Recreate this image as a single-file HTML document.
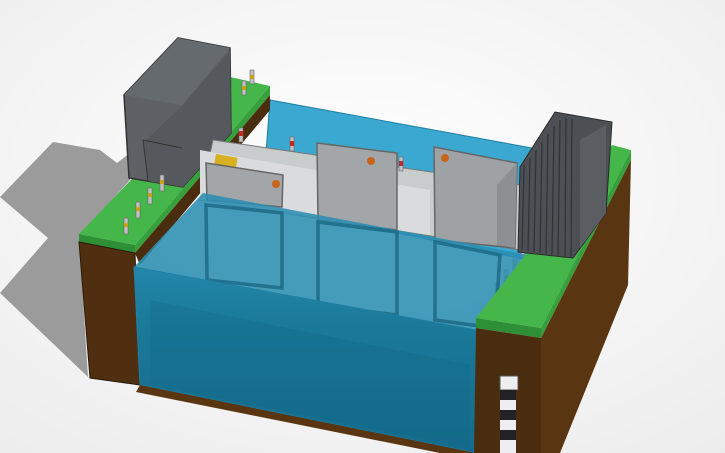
<!DOCTYPE html>
<html><head><meta charset="utf-8"><style>html,body{margin:0;padding:0;width:725px;height:453px;overflow:hidden;background:#f4f4f4}</style></head>
<body>
<svg width="725" height="453" viewBox="0 0 725 453" xmlns="http://www.w3.org/2000/svg">
<defs>
<radialGradient id="bg" cx="0.5" cy="0.4" r="0.8"><stop offset="0" stop-color="#ffffff"/><stop offset="1" stop-color="#ececec"/></radialGradient>
<linearGradient id="front" x1="0" y1="0" x2="0" y2="1"><stop offset="0" stop-color="#2387a9"/><stop offset="0.35" stop-color="#1a7898"/><stop offset="1" stop-color="#146c8b"/></linearGradient>
</defs>
<rect width="725" height="453" fill="url(#bg)"/>
<!-- shadow -->
<polygon points="0,197 53,142 100,150 117,163 130,153 130,180 79,236 88,377 0,293 48,238" fill="#9b9b9b"/>
<!-- back water wall -->
<polygon points="270,100 532,148 528,260 262,205" fill="#3aa8d0" stroke="#1f7fa3" stroke-width="1"/>
<!-- left green ledge -->
<polygon points="79,234 230,77 270,86 135,245" fill="#45b64a"/>
<polygon points="79,234 135,245 135,253 79,242" fill="#2f8f36"/>
<polygon points="135,245 270,86 270,95 135,253" fill="#36a03c"/>
<!-- left brown -->
<polygon points="79,242 135,253 140,385 90,378" fill="#4f2f10" stroke="#2a1906" stroke-width="1"/>
<polygon points="135,253 270,95 270,110 140,265" fill="#4a2c0e"/>
<!-- left block -->
<polygon points="124,95 178,38 230,48 231,133 183,187 129,178" fill="#5e6266" stroke="#333" stroke-width="1.5"/>
<polygon points="124,95 178,38 230,48 182,105" fill="#656a6e"/>
<polygon points="143,143 183,105 230,50 231,133 183,187 148,181" fill="#55595d"/>
<line x1="143" y1="140" x2="148" y2="181" stroke="#333"/>
<line x1="143" y1="140" x2="182" y2="148" stroke="#333"/>
<!-- gray structure -->
<polygon points="213,140 520,185 520,250 200,200" fill="#c9cccd" stroke="#777"/>
<polygon points="200,150 430,190 430,235 200,200" fill="#d9dbdc"/>
<rect x="216" y="154" width="22" height="10" fill="#d8b020" transform="rotate(10 216 154)"/>
<polygon points="206,163 283,175 282,207 207,200" fill="#a2a6a8" stroke="#666" stroke-width="1.5"/>
<polygon points="317,143 397,153 397,230 318,220" fill="#a2a6a8" stroke="#666" stroke-width="1.5"/>
<polygon points="434,147 517,163 515,248 435,240" fill="#9ea2a4" stroke="#666" stroke-width="1.5"/>
<polygon points="497,185 517,163 515,248 497,245" fill="#8c9092"/>
<circle cx="276" cy="184" r="4" fill="#c8651a"/>
<circle cx="371" cy="161" r="4" fill="#c8651a"/>
<circle cx="445" cy="158" r="4" fill="#c8651a"/>
<!-- pins -->
<g fill="#c0c0c0" stroke="#666" stroke-width="0.6">
<rect x="239" y="128" width="4" height="14"/><rect x="290" y="137" width="4" height="14"/><rect x="399" y="157" width="4" height="14"/>
<rect x="250" y="70" width="4" height="14"/><rect x="242" y="81" width="4" height="14"/>
<rect x="160" y="175" width="4" height="16"/><rect x="148" y="188" width="4" height="16"/><rect x="136" y="202" width="4" height="16"/><rect x="124" y="218" width="4" height="16"/>
<rect x="521" y="242" width="4" height="16"/><rect x="513" y="257" width="4" height="16"/><rect x="504" y="270" width="4" height="16"/><rect x="495" y="283" width="4" height="16"/>
</g>
<g fill="#c9a01c"><rect x="160" y="180" width="4" height="4"/><rect x="148" y="193" width="4" height="4"/><rect x="136" y="207" width="4" height="4"/><rect x="124" y="223" width="4" height="4"/><rect x="250" y="75" width="4" height="4"/><rect x="242" y="86" width="4" height="4"/>
<rect x="521" y="247" width="4" height="4"/><rect x="513" y="262" width="4" height="4"/><rect x="504" y="275" width="4" height="4"/><rect x="495" y="288" width="4" height="4"/></g>
<g fill="#c62828"><rect x="239" y="131" width="4" height="5"/><rect x="290" y="141" width="4" height="5"/><rect x="399" y="161" width="4" height="5"/></g>
<!-- water top surface -->
<polygon points="203,193 528,255 476,330 134,267" fill="#2b8db1" fill-opacity="0.88"/>
<g fill="none" stroke="#1c6a86" stroke-width="3.5" opacity="0.85">
<polygon points="206,205 282,213 282,288 207,280"/>
<polygon points="318,222 397,232 397,315 318,305"/>
<polygon points="435,242 500,255 495,328 435,320"/>
</g>
<!-- water front face -->
<polygon points="134,267 476,330 476,453 140,385" fill="url(#front)" stroke="#1f80a3"/>
<polygon points="150,300 470,365 470,448 150,385" fill="#0f6482" opacity="0.25"/>
<!-- bottom brown -->
<polygon points="140,385 476,453 440,453 136,392" fill="#5a3512"/>
<!-- right green ledge -->
<polygon points="476,318 612,145 631,150 541,328" fill="#45b64a"/>
<polygon points="476,318 541,328 541,338 476,328" fill="#2f8f36"/>
<polygon points="541,328 631,150 631,160 541,338" fill="#36a03c"/>
<!-- right brown -->
<polygon points="476,328 541,338 541,453 474,453" fill="#4a2c0e"/>
<polygon points="541,338 631,160 628,285 560,453 541,453" fill="#5a3512"/>
<!-- heat sink -->
<polygon points="520,167 555,112 612,122 606,213 573,258 518,252" fill="#4c5054" stroke="#2a2a2a"/>
<g stroke="#2f3235" stroke-width="1.2">
<line x1="524" y1="165" x2="522" y2="250"/><line x1="530" y1="158" x2="528" y2="251"/><line x1="536" y1="150" x2="534" y2="252"/><line x1="542" y1="142" x2="540" y2="253"/><line x1="548" y1="134" x2="546" y2="254"/><line x1="554" y1="126" x2="552" y2="255"/><line x1="560" y1="120" x2="558" y2="256"/><line x1="566" y1="118" x2="565" y2="257"/><line x1="572" y1="119" x2="571" y2="258"/>
</g>
<polygon points="580,140 606,125 606,213 580,248" fill="#5a5e62"/>
<!-- ruler -->
<g><rect x="500" y="376" width="18" height="14" fill="#eee" stroke="#555"/>
<rect x="500" y="390" width="16" height="10" fill="#222"/><rect x="500" y="400" width="16" height="10" fill="#eee"/><rect x="500" y="410" width="16" height="10" fill="#222"/><rect x="500" y="420" width="16" height="10" fill="#eee"/><rect x="500" y="430" width="16" height="10" fill="#222"/><rect x="500" y="440" width="16" height="13" fill="#eee"/></g>
</svg>
</body></html>
